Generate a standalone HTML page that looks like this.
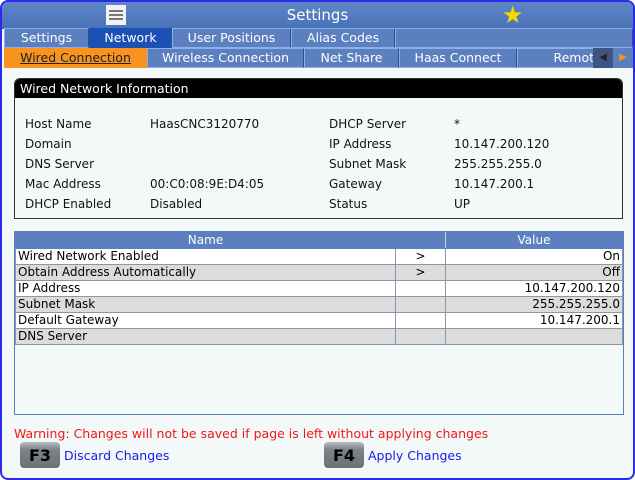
<html><head><style>
body{margin:0;width:635px;height:480px;overflow:hidden;font-family:"DejaVu Sans","Liberation Sans",sans-serif;font-size:12px;background:#fff}
.frame{position:absolute;left:0;top:0;width:631px;height:476px;border:2px solid #2a2ae8;border-radius:8px;background:#f3f9f9;overflow:hidden}
.title{position:absolute;left:0;top:0;width:631px;height:26px;background:linear-gradient(#5f86c6,#4a72b8);color:#fff;font-size:15px;text-align:center;line-height:26px;border-bottom:1px solid #2a55c0}
.a{position:absolute;box-sizing:border-box}
.tab{background:#5b7fbf;color:#fff;border:1px solid #8fb0e6;border-right-color:#2f4f8a;text-align:center;line-height:18px;font-size:12.5px}
.lbl{position:absolute;font-size:12px;color:#111}
table{border-collapse:collapse;font-size:12px}
td{border:1px solid #8a97a8;height:15px;padding:0 2px;line-height:15px}
</style></head><body>
<div class="frame">
<div class="title">Settings</div>
<div class="a" style="left:104px;top:3px;width:20px;height:20px;background:#f2f2f2"><div style="margin:5px 3px;height:10px;background:repeating-linear-gradient(#777 0 2px,transparent 2px 4px)"></div></div>
<div class="a" style="left:500px;top:1px;font-size:24px;color:#f7d800;line-height:24px">★</div>
<div class="a tab" style="left:2px;top:26px;width:85px;height:20px">Settings</div>
<div class="a tab" style="left:87px;top:26px;width:83px;height:20px;background:#1c50b4;border-color:#1c50b4">Network</div>
<div class="a tab" style="left:170px;top:26px;width:119px;height:20px">User Positions</div>
<div class="a tab" style="left:289px;top:26px;width:104px;height:20px">Alias Codes</div>
<div class="a tab" style="left:393px;top:26px;width:238px;height:20px"></div>
<div class="a tab" style="left:2px;top:46px;width:143px;height:20px;background:#f7931e;border-color:#f7931e;color:#222;text-decoration:underline">Wired Connection</div>
<div class="a tab" style="left:145px;top:46px;width:157px;height:20px">Wireless Connection</div>
<div class="a tab" style="left:302px;top:46px;width:95px;height:20px">Net Share</div>
<div class="a tab" style="left:397px;top:46px;width:118px;height:20px">Haas Connect</div>
<div class="a tab" style="left:515px;top:46px;width:78px;height:20px;text-align:right;padding-right:0;overflow:hidden">Remot</div>
<div class="a" style="left:591px;top:46px;width:20px;height:20px;background:#3d5680;color:#222;text-align:center;line-height:20px;font-size:10px">◀</div>
<div class="a" style="left:611px;top:46px;width:20px;height:20px;background:#5b7fbf;color:#f7931e;text-align:center;line-height:20px;font-size:10px">▶</div>

<div class="a" style="left:12px;top:76px;width:609px;height:141px;border:1px solid #333;border-radius:6px 6px 0 0;background:#f3f9f9">
<div style="background:#000;color:#fff;height:19px;line-height:19px;padding-left:5px;border-radius:5px 5px 0 0;font-size:12.5px">Wired Network Information</div>
<div class="lbl" style="left:10px;top:38px">Host Name</div><div class="lbl" style="left:135px;top:38px">HaasCNC3120770</div>
<div class="lbl" style="left:10px;top:58px">Domain</div>
<div class="lbl" style="left:10px;top:78px">DNS Server</div>
<div class="lbl" style="left:10px;top:98px">Mac Address</div><div class="lbl" style="left:135px;top:98px">00:C0:08:9E:D4:05</div>
<div class="lbl" style="left:10px;top:118px">DHCP Enabled</div><div class="lbl" style="left:135px;top:118px">Disabled</div>
<div class="lbl" style="left:314px;top:38px">DHCP Server</div><div class="lbl" style="left:439px;top:38px">*</div>
<div class="lbl" style="left:314px;top:58px">IP Address</div><div class="lbl" style="left:439px;top:58px">10.147.200.120</div>
<div class="lbl" style="left:314px;top:78px">Subnet Mask</div><div class="lbl" style="left:439px;top:78px">255.255.255.0</div>
<div class="lbl" style="left:314px;top:98px">Gateway</div><div class="lbl" style="left:439px;top:98px">10.147.200.1</div>
<div class="lbl" style="left:314px;top:118px">Status</div><div class="lbl" style="left:439px;top:118px">UP</div>
</div>

<div class="a" style="left:12px;top:229px;width:610px;height:184px;border:1px solid #5a7fc0;background:#f3f9f9">
<table style="width:608px">
<tr style="background:#5b7fbf;color:#fff"><td style="text-align:center;width:375px;border-color:#5b7fbf">Name</td><td style="width:45px;border-color:#5b7fbf #ccc #5b7fbf #ccc"></td><td style="text-align:center;border-color:#5b7fbf">Value</td></tr>
<tr style="background:#fff"><td>Wired Network Enabled</td><td style="text-align:center">&gt;</td><td style="text-align:right">On</td></tr>
<tr style="background:#dcdcdc"><td>Obtain Address Automatically</td><td style="text-align:center">&gt;</td><td style="text-align:right">Off</td></tr>
<tr style="background:#fff"><td>IP Address</td><td></td><td style="text-align:right">10.147.200.120</td></tr>
<tr style="background:#dcdcdc"><td>Subnet Mask</td><td></td><td style="text-align:right">255.255.255.0</td></tr>
<tr style="background:#fff"><td>Default Gateway</td><td></td><td style="text-align:right">10.147.200.1</td></tr>
<tr style="background:#dcdcdc"><td>DNS Server</td><td></td><td></td></tr>
</table></div>

<div class="a" style="left:12px;top:424px;color:#f01818;font-size:12.5px">Warning: Changes will not be saved if page is left without applying changes</div>
<div class="a" style="left:18px;top:440px;width:40px;height:26px;border-radius:4px;background:linear-gradient(#b8bcc0,#7d8288 30%,#6d7278);color:#000;font-weight:bold;font-size:16px;text-align:center;line-height:28px">F3</div>
<div class="a" style="left:62px;top:446px;color:#1a1ae6;font-size:12.5px">Discard Changes</div>
<div class="a" style="left:322px;top:440px;width:40px;height:26px;border-radius:4px;background:linear-gradient(#b8bcc0,#7d8288 30%,#6d7278);color:#000;font-weight:bold;font-size:16px;text-align:center;line-height:28px">F4</div>
<div class="a" style="left:366px;top:446px;color:#1a1ae6;font-size:12.5px">Apply Changes</div>
</div>
</body></html>
